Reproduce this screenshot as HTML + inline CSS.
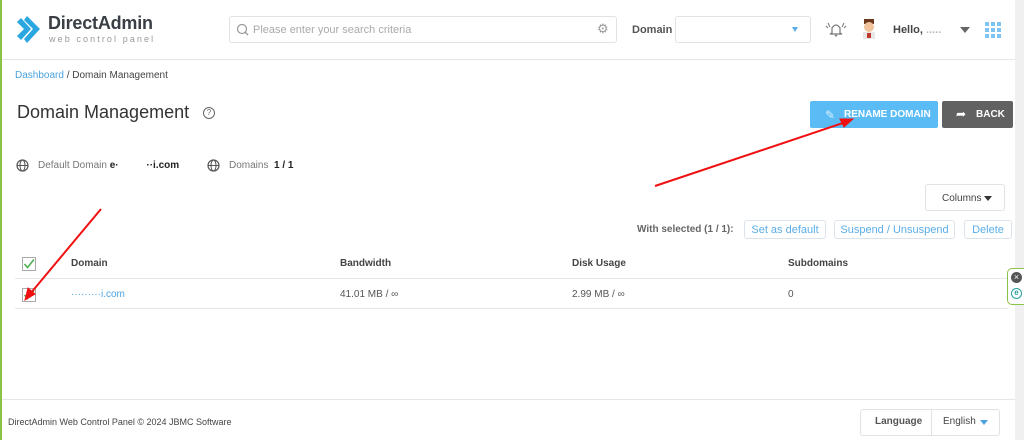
<!DOCTYPE html>
<html><head><meta charset="utf-8"><style>
*{box-sizing:border-box;margin:0;padding:0}
body{width:1024px;height:440px;overflow:hidden;background:#fff;font-family:"Liberation Sans",sans-serif;position:relative;color:#333}
.a{position:absolute}
.btnw{position:absolute;border:1px solid #dde3ea;border-radius:3px;background:#fff;color:#5aaee8;font-size:11px;display:flex;align-items:center;justify-content:center}
</style></head><body>
<div class="a" style="left:0;top:0;width:2px;height:440px;background:#8bc34a"></div>
<div class="a" style="left:1015px;top:0;width:9px;height:440px;background:#f0f0f0"></div>
<!-- header -->
<div class="a" style="left:2px;top:59px;width:1013px;height:1px;background:#e6e6e6"></div>
<svg class="a" style="left:15px;top:14px" width="28" height="32" viewBox="0 0 28 32"><path d="M2 8 L9 15 L2 22 L6 26 L16 15 L6 4Z" fill="#2aa6e0"/><path d="M12 2 L25 15 L12 29 L9 25 L18 15 L9 6Z" fill="#2aa6e0"/></svg>
<div class="a" style="left:48px;top:13px;font-size:18px;font-weight:bold;color:#3a3f45;letter-spacing:-0.2px">DirectAdmin</div>
<div class="a" style="left:49px;top:34px;font-size:9px;color:#999;letter-spacing:2.1px">web control panel</div>
<div class="a" style="left:229px;top:16px;width:388px;height:27px;border:1px solid #e2e2e2;border-radius:3px"></div>
<svg class="a" style="left:236px;top:23px" width="13" height="13"><circle cx="6" cy="6" r="4.5" fill="none" stroke="#999" stroke-width="1.2"/><path d="M9 9 L12 12" stroke="#999" stroke-width="1.3"/></svg>
<div class="a" style="left:253px;top:24px;font-size:11px;color:#aaa">Please enter your search criteria</div>
<div class="a" style="left:597px;top:21px;font-size:13px;color:#999">⚙</div>
<div class="a" style="left:632px;top:24px;font-size:11px;font-weight:bold;color:#555">Domain</div>
<div class="a" style="left:675px;top:16px;width:136px;height:27px;border:1px solid #e2e2e2;border-radius:3px"></div>
<div class="a" style="left:792px;top:27px;width:0;height:0;border-left:3px solid transparent;border-right:3px solid transparent;border-top:5px solid #5aaee8"></div>
<svg class="a" style="left:825px;top:19px" width="22" height="20"><path d="M7 14 L7 9 Q11 3 15 9 L15 14 L17 15 L5 15Z M10 16 Q11 18 12 16" fill="none" stroke="#777" stroke-width="1.2"/><path d="M3 4 L5 8 M1 7 L3 9 M19 4 L17 8 M21 7 L19 9" stroke="#777" stroke-width="1"/></svg>
<svg class="a" style="left:860px;top:18px" width="18" height="22"><rect x="4" y="1" width="10" height="5" fill="#6b3a1e"/><circle cx="9" cy="9" r="5" fill="#f2c39a"/><rect x="3" y="14" width="12" height="7" fill="#e8e8e8"/><rect x="7" y="15" width="4" height="5" fill="#c0392b"/></svg>
<div class="a" style="left:893px;top:24px;font-size:11px;font-weight:bold;color:#444">Hello, <span style="color:#bbb">.....</span></div>
<div class="a" style="left:960px;top:27px;width:0;height:0;border-left:5px solid transparent;border-right:5px solid transparent;border-top:6px solid #666"></div>
<div class="a" style="left:985px;top:22px;width:16px;height:16px;display:grid;grid-template-columns:repeat(3,4px);gap:2px">
<i style="background:#7ec4f5"></i><i style="background:#7ec4f5"></i><i style="background:#7ec4f5"></i><i style="background:#7ec4f5"></i><i style="background:#7ec4f5"></i><i style="background:#7ec4f5"></i><i style="background:#7ec4f5"></i><i style="background:#7ec4f5"></i><i style="background:#7ec4f5"></i></div>
<!-- breadcrumb -->
<div class="a" style="left:15px;top:70px;font-size:10px;color:#444"><span style="color:#4aa3df">Dashboard</span> / Domain Management</div>
<div class="a" style="left:17px;top:102px;font-size:18px;color:#333">Domain Management</div>
<div class="a" style="left:203px;top:107px;width:12px;height:12px;border:1.3px solid #666;border-radius:50%;font-size:8px;text-align:center;line-height:10px;color:#666">?</div>
<div class="a" style="left:810px;top:101px;width:128px;height:27px;background:#5bbcf5;border-radius:2px;color:#fff;font-size:10px;font-weight:bold;line-height:27px;padding-left:34px">RENAME DOMAIN</div>
<div class="a" style="left:825px;top:108px;color:#d8eefc;font-size:12px">✎</div>
<div class="a" style="left:942px;top:101px;width:71px;height:27px;background:#616161;border-radius:2px;color:#fff;font-size:10px;font-weight:bold;line-height:27px;padding-left:34px">BACK</div>
<div class="a" style="left:956px;top:107px;color:#fff;font-size:12px">➦</div>
<!-- info -->
<svg class="a" style="left:16px;top:159px" width="13" height="13"><circle cx="6.5" cy="6.5" r="5.5" fill="none" stroke="#555" stroke-width="1.2"/><ellipse cx="6.5" cy="6.5" rx="2.5" ry="5.5" fill="none" stroke="#555"/><path d="M1 6.5H12" stroke="#555"/></svg>
<div class="a" style="left:38px;top:160px;font-size:10px;color:#777">Default Domain <b style="color:#222">e·&nbsp;&nbsp;&nbsp;&nbsp;&nbsp;&nbsp;&nbsp;&nbsp;&nbsp;&nbsp;··i.com</b></div>
<svg class="a" style="left:207px;top:159px" width="13" height="13"><circle cx="6.5" cy="6.5" r="5.5" fill="none" stroke="#555" stroke-width="1.2"/><ellipse cx="6.5" cy="6.5" rx="2.5" ry="5.5" fill="none" stroke="#555"/><path d="M1 6.5H12" stroke="#555"/></svg>
<div class="a" style="left:229px;top:160px;font-size:10px;color:#777">Domains &nbsp;<b style="color:#222">1 / 1</b></div>
<!-- columns -->
<div class="a" style="left:925px;top:184px;width:80px;height:27px;border:1px solid #e2e2e2;border-radius:3px;font-size:10px;color:#444;line-height:27px;padding-left:16px">Columns</div>
<div class="a" style="left:984px;top:196px;width:0;height:0;border-left:4px solid transparent;border-right:4px solid transparent;border-top:5px solid #333"></div>
<div class="a" style="left:637px;top:224px;font-size:10px;font-weight:bold;color:#666">With selected (1 / 1):</div>
<div class="btnw" style="left:744px;top:220px;width:82px;height:19px">Set as default</div>
<div class="btnw" style="left:834px;top:220px;width:121px;height:19px">Suspend / Unsuspend</div>
<div class="btnw" style="left:964px;top:220px;width:48px;height:19px">Delete</div>
<!-- table -->
<div class="a" style="left:15px;top:278px;width:993px;height:1px;background:#e6e6e6"></div>
<div class="a" style="left:15px;top:308px;width:993px;height:1px;background:#e6e6e6"></div>
<svg class="a" style="left:22px;top:257px" width="14" height="14"><rect x="0.5" y="0.5" width="13" height="13" fill="#fff" stroke="#aaa"/><path d="M2.5 7 L5.5 10.5 L12 2.5" fill="none" stroke="#4caf50" stroke-width="1.6"/></svg>
<svg class="a" style="left:22px;top:288px" width="14" height="14"><rect x="0.5" y="0.5" width="13" height="13" fill="#fff" stroke="#aaa"/><path d="M2.5 7 L5.5 10.5 L12 2.5" fill="none" stroke="#4caf50" stroke-width="1.6"/></svg>
<div class="a" style="left:71px;top:258px;font-size:10px;font-weight:bold;color:#444">Domain</div>
<div class="a" style="left:340px;top:258px;font-size:10px;font-weight:bold;color:#444">Bandwidth</div>
<div class="a" style="left:572px;top:258px;font-size:10px;font-weight:bold;color:#444">Disk Usage</div>
<div class="a" style="left:788px;top:258px;font-size:10px;font-weight:bold;color:#444">Subdomains</div>
<div class="a" style="left:71px;top:289px;font-size:10px;color:#4aa3df">·········i.com</div>
<div class="a" style="left:340px;top:289px;font-size:10px;color:#555">41.01 MB / ∞</div>
<div class="a" style="left:572px;top:289px;font-size:10px;color:#555">2.99 MB / ∞</div>
<div class="a" style="left:788px;top:289px;font-size:10px;color:#555">0</div>
<div class="a" style="left:1007px;top:268px;width:17px;height:37px;border:1.5px solid #8bc34a;border-right:none;border-radius:5px 0 0 5px;background:#fff"></div>
<div class="a" style="left:1011px;top:272px;width:11px;height:11px;border-radius:50%;background:#555;color:#fff;font-size:9px;line-height:11px;text-align:center">×</div>
<div class="a" style="left:1011px;top:288px;width:11px;height:11px;border-radius:50%;border:1.5px solid #2a9d9d;color:#2a9d9d;font-size:8px;line-height:8px;text-align:center;font-weight:bold">e</div>
<!-- arrows -->
<svg class="a" style="left:0;top:0" width="1024" height="440"><g stroke="#f01010" stroke-width="2" fill="#f01010"><path d="M655 186 L846 122"/><path d="M853 119 L840 119 L844 127Z" stroke-width="1"/><path d="M101 209 L30 294"/><path d="M25 300 L28 288 L35 294Z" stroke-width="1"/></g></svg>
<!-- footer -->
<div class="a" style="left:2px;top:399px;width:1013px;height:1px;background:#e6e6e6"></div>
<div class="a" style="left:8px;top:417px;font-size:9px;color:#444">DirectAdmin Web Control Panel © 2024 JBMC Software</div>
<div class="a" style="left:860px;top:409px;width:140px;height:27px;border:1px solid #e2e2e2;border-radius:3px"></div>
<div class="a" style="left:931px;top:409px;width:1px;height:27px;background:#e2e2e2"></div>
<div class="a" style="left:875px;top:416px;font-size:10px;font-weight:bold;color:#555">Language</div>
<div class="a" style="left:943px;top:416px;font-size:10px;color:#444">English</div>
<div class="a" style="left:980px;top:420px;width:0;height:0;border-left:4px solid transparent;border-right:4px solid transparent;border-top:5px solid #4aa3df"></div>
</body></html>
